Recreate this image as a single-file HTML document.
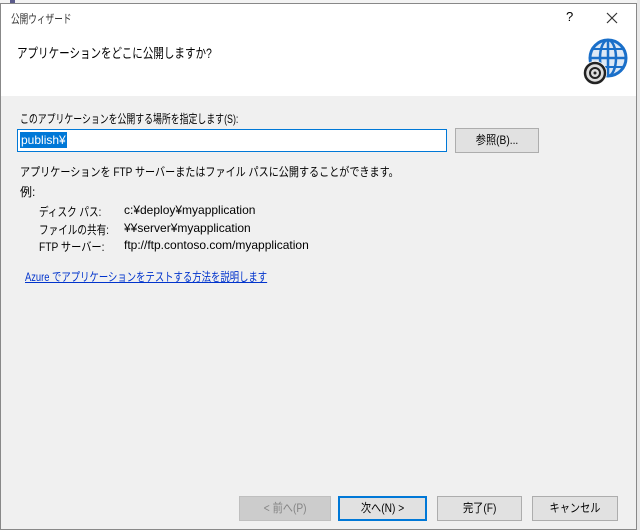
<!DOCTYPE html>
<html><head><meta charset="utf-8"><style>
*{margin:0;padding:0;box-sizing:border-box}
body{width:640px;height:530px;position:relative;overflow:hidden;background:#f0f0f0;font-family:"Liberation Sans","Noto Sans CJK JP",sans-serif;font-size:12px;color:#000}
.a{position:absolute;white-space:nowrap}
.s{transform-origin:0 50%}
.btn{position:absolute;background:#e1e1e1;border:1px solid #adadad;text-align:center;font-size:12px;line-height:22px}
.btn span{display:inline-block;transform:scaleX(.85)}
</style></head><body>
<div class="a" style="left:0;top:0;width:640px;height:4px;background:#f3f3f3"></div>
<div class="a" style="left:10px;top:0;width:5px;height:3px;background:#5a5a8a"></div>
<div class="a" style="left:0;top:3px;width:637px;height:527px;background:#f0f0f0;border:1px solid #888"></div>
<div class="a" style="left:637px;top:0;width:3px;height:530px;background:#e8e8e8"></div>
<div class="a" style="left:1px;top:4px;width:635px;height:92px;background:#fff"></div>
<div class="a s" style="left:11px;top:10px;font-size:12px;color:#333;transform:scaleX(.72)">公開ウィザード</div>
<div class="a" style="left:566px;top:9px;font-size:13px">?</div>
<svg class="a" style="left:606px;top:12px" width="12" height="12"><path d="M1 1L11 11M11 1L1 11" stroke="#333" stroke-width="1.2"/></svg>
<div class="a s" style="left:17px;top:42px;font-size:13.5px;transform:scaleX(.78)">アプリケーションをどこに公開しますか?</div>
<svg class="a" style="left:580px;top:36px" width="50" height="52" viewBox="0 0 50 52">
<circle cx="28" cy="22" r="18" fill="#dde8f5" stroke="#1a6fc9" stroke-width="3"/>
<ellipse cx="28" cy="22" rx="8" ry="18" fill="none" stroke="#1a6fc9" stroke-width="2.5"/>
<line x1="10" y1="22" x2="46" y2="22" stroke="#1a6fc9" stroke-width="2.5"/>
<line x1="28" y1="4" x2="28" y2="40" stroke="#1a6fc9" stroke-width="2.5"/>
<line x1="13" y1="13" x2="43" y2="13" stroke="#1a6fc9" stroke-width="2"/>
<line x1="13" y1="31" x2="43" y2="31" stroke="#1a6fc9" stroke-width="2"/>
<circle cx="15" cy="37" r="12" fill="#fff"/>
<circle cx="15" cy="37" r="10" fill="#ddd" stroke="#222" stroke-width="2.5"/>
<circle cx="15" cy="37" r="5" fill="none" stroke="#222" stroke-width="2"/>
<circle cx="15" cy="37" r="1.5" fill="#222"/>
</svg>
<div class="a s" style="left:20px;top:110px;transform:scaleX(.74)">このアプリケーションを公開する場所を指定します(S):</div>
<div class="a" style="left:17px;top:129px;width:430px;height:23px;background:#fff;border:1px solid #0078d7"></div>
<div class="a" style="left:20px;top:132px;background:#0078d7;color:#fff;padding:0 1px;line-height:16px">publish¥</div>
<div class="btn" style="left:455px;top:128px;width:84px;height:25px"><span>参照(B)...</span></div>
<div class="a s" style="left:20px;top:163px;transform:scaleX(.84)">アプリケーションを FTP サーバーまたはファイル パスに公開することができます。</div>
<div class="a" style="left:20px;top:183px">例:</div>
<div class="a s" style="left:39px;top:203px;transform:scaleX(.8)">ディスク パス:</div>
<div class="a" style="left:124px;top:203px">c:¥deploy¥myapplication</div>
<div class="a s" style="left:39px;top:221px;transform:scaleX(.8)">ファイルの共有:</div>
<div class="a" style="left:124px;top:221px">¥¥server¥myapplication</div>
<div class="a s" style="left:39px;top:238px;transform:scaleX(.85)">FTP サーバー:</div>
<div class="a" style="left:124px;top:238px">ftp://ftp.contoso.com/myapplication</div>
<div class="a s" style="left:25px;top:268px;color:#0033cc;text-decoration:underline;transform:scaleX(.78)">Azure でアプリケーションをテストする方法を説明します</div>
<div class="btn" style="left:239px;top:496px;width:92px;height:25px;background:#cccccc;border-color:#bfbfbf;color:#838383"><span>&lt; 前へ(P)</span></div>
<div class="btn" style="left:338px;top:496px;width:89px;height:25px;border:2px solid #0078d7;line-height:21px"><span>次へ(N) &gt;</span></div>
<div class="btn" style="left:437px;top:496px;width:85px;height:25px"><span>完了(F)</span></div>
<div class="btn" style="left:532px;top:496px;width:86px;height:25px"><span>キャンセル</span></div>
</body></html>
